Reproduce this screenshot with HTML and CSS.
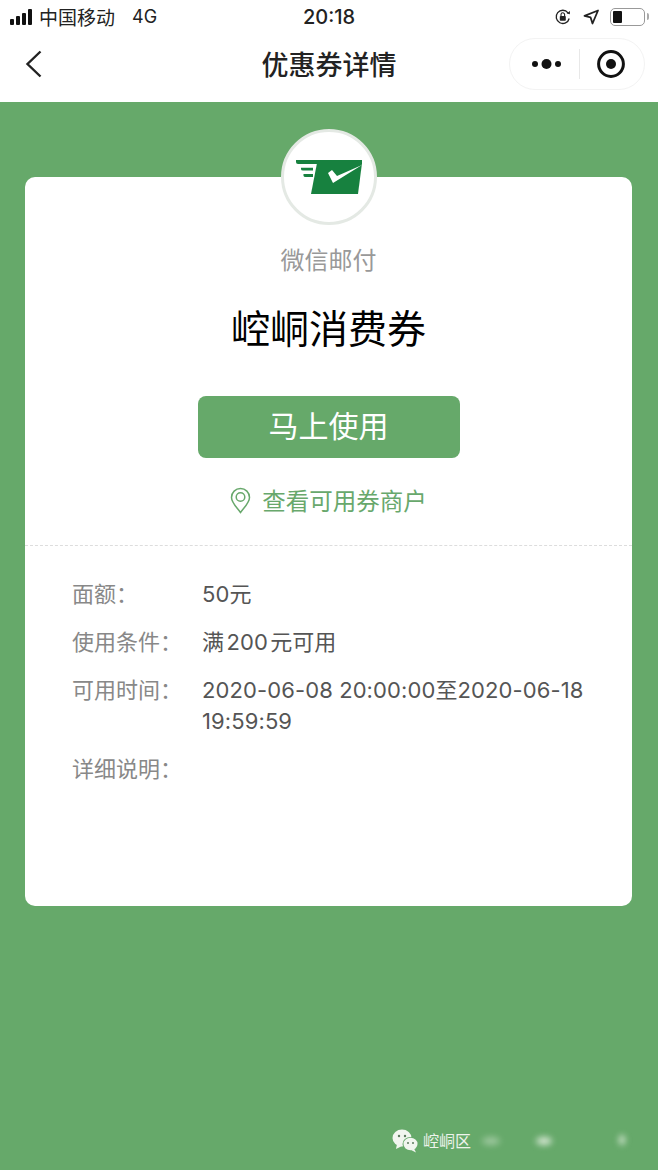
FILE: index.html
```html
<!DOCTYPE html>
<html>
<head>
    <meta charset="UTF-8">
    <title>优惠券详情</title>
    <link rel="stylesheet" href="styles.css">
</head>
<body>
    <div class="page">
        <div class="header">
            <div class="status">
                <div class="status-left">
                    <span class="signal"><i></i><i></i><i></i><i></i></span>
                    <span class="carrier">中国移动</span>
                    <span class="net">4G</span>
                </div>
                <div class="clock">20:18</div>
                <div class="status-right">
                    <svg width="18" height="18" viewBox="0 0 18 18">
                        <path d="M15.2 10.5A6.6 6.6 0 1 1 14 4.8" fill="none" stroke="#222" stroke-width="1.3"/>
                        <path d="M12.6 5.6l3.2.6.2-3.2z" fill="#222"/>
                        <rect x="5.8" y="8" width="6" height="4.8" rx=".8" fill="#222"/>
                        <path d="M7 8V6.6a1.8 1.8 0 0 1 3.6 0V8" fill="none" stroke="#222" stroke-width="1.1"/>
                    </svg>
                    <svg width="16" height="16" viewBox="0 0 16 16">
                        <path d="M15 1.5L9.5 14.5 7.6 8.4 1.5 6.8z" fill="none" stroke="#222" stroke-width="1.8" stroke-linejoin="round"/>
                    </svg>
                    <span class="battery"><i></i></span>
                </div>
            </div>
            <div class="nav">
                <svg class="back" width="18" height="28" viewBox="0 0 18 28">
                    <path d="M15.5 1.5L2.5 14l13 12.5" fill="none" stroke="#222" stroke-width="2.4"/>
                </svg>
                <div class="nav-title">优惠券详情</div>
                <div class="capsule">
                    <svg width="34" height="14" viewBox="0 0 34 14">
                        <circle cx="5" cy="7" r="3" fill="#111"/>
                        <circle cx="16.500" cy="7" r="5" fill="#111"/>
                        <circle cx="28" cy="7" r="3" fill="#111"/>
                    </svg>
                    <span class="capsule-line"></span>
                    <svg width="30" height="30" viewBox="0 0 30 30">
                        <circle cx="15" cy="15" r="12.4" fill="none" stroke="#111" stroke-width="3"/>
                        <circle cx="15" cy="15" r="5" fill="#111"/>
                    </svg>
                </div>
            </div>
        </div>

        <div class="card">
            <div class="logo">
                <svg width="68" height="36" viewBox="0 0 68 36">
                    <path d="M22 4H67L63 35H16z" fill="#17813f"/>
                    <path d="M1 1H67V5H3Q1 5 1 3z" fill="#17813f"/>
                    <path d="M6 8.700H18V11.500H8Q6 11.500 6 10z" fill="#17813f"/>
                    <path d="M8.500 15H18V18H10.500Q8.500 18 8.500 16.500z" fill="#17813f"/>
                    <path d="M33 14L37 11 42 17 67 6 38 24z" fill="#fff"/>
                </svg>
            </div>
            <div class="brand">微信邮付</div>
            <div class="coupon-name">崆峒消费券</div>
            <div class="use-btn">马上使用</div>
            <div class="shops">
                <svg width="21" height="27" viewBox="0 0 21 27">
                    <path d="M10.500 25.500C6 19.500 1.500 15.500 1.500 10.500a9 9 0 0 1 18 0c0 5-4.500 9-9 15z" fill="none" stroke="#68a86c" stroke-width="1.500"/>
                    <circle cx="10.500" cy="10" r="4.300" fill="none" stroke="#68a86c" stroke-width="1.500"/>
                </svg>
                <span>查看可用券商户</span>
            </div>
            <div class="dash"></div>
            <div class="info">
                <div class="row"><span class="label">面额：</span><span class="value">50元</span></div>
                <div class="row"><span class="label">使用条件：</span><span class="value tight">满 200 元可用</span></div>
                <div class="row"><span class="label">可用时间：</span><span class="value">2020-06-08 20:00:00至2020-06-18 19:59:59</span></div>
                <div class="row"><span class="label">详细说明：</span><span class="value"></span></div>
            </div>
        </div>

        <div class="footer">
            <svg width="28" height="24" viewBox="0 0 28 24">
                <ellipse cx="10" cy="9" rx="9.500" ry="8.500" fill="#f1f5ef"/>
                <path d="M5 15l-1 5 6-3z" fill="#f1f5ef"/>
                <ellipse cx="18.500" cy="15" rx="8" ry="7" fill="#66a96a"/>
                <ellipse cx="18.500" cy="15" rx="7" ry="6.200" fill="#f1f5ef"/>
                <path d="M22 19.500l2 4-5-2.500z" fill="#f1f5ef"/>
                <circle cx="7" cy="7" r="1.200" fill="#5c7a5e"/>
                <circle cx="13" cy="7" r="1.200" fill="#5c7a5e"/>
                <circle cx="16" cy="14" r="1" fill="#5c7a5e"/>
                <circle cx="21" cy="14" r="1" fill="#5c7a5e"/>
            </svg>
            <span class="footer-name">崆峒区</span>
            <span class="blob blob-a"></span>
            <span class="blob blob-b"></span>
            <span class="blob blob-c"></span>
        </div>
    </div>
</body>
</html>
```

FILE: styles.css
```css
* {
    margin: 0;
    padding: 0;
    box-sizing: border-box;
}
body {
    font-family: "Inter", "Noto Sans CJK SC", sans-serif;
    background: #66a96a;
}
.page {
    width: 658px;
    height: 1170px;
    display: flex;
    flex-direction: column;
    overflow: hidden;
}
.header {
    height: 102px;
    background: #fff;
    flex-shrink: 0;
}
.status {
    height: 33px;
    padding: 0 10px 0 10px;
    display: grid;
    grid-template-columns: 1fr auto 1fr;
    align-items: center;
    color: #222;
}
.status-left {
    display: flex;
    align-items: center;
    font-size: 19px;
}
.signal {
    display: flex;
    align-items: flex-end;
    gap: 2px;
    margin-right: 7px;
}
.signal i {
    display: block;
    width: 4px;
    background: #111;
    border-radius: 1px;
}
.signal i:nth-child(1) { height: 6px; }
.signal i:nth-child(2) { height: 9px; }
.signal i:nth-child(3) { height: 12px; }
.signal i:nth-child(4) { height: 16px; }
.net {
    margin-left: 17px;
    font-size: 18px;
}
.clock {
    font-size: 20px;
    font-weight: 500;
    color: #222;
}
.status-right {
    display: flex;
    align-items: center;
    justify-content: flex-end;
    gap: 11px;
}
.battery {
    position: relative;
    width: 35px;
    height: 18px;
    border: 1.500px solid #999;
    border-radius: 5px;
    padding: 2px;
    margin-right: 3px;
}
.battery:after {
    content: "";
    position: absolute;
    right: -5px;
    top: 4px;
    width: 2px;
    height: 7px;
    background: #aaa;
    border-radius: 0 2px 2px 0;
}
.battery i {
    display: block;
    width: 9px;
    height: 100%;
    background: #111;
    border-radius: 1px;
}
.nav {
    height: 69px;
    padding: 0 13px 8px 13px;
    display: grid;
    grid-template-columns: 1fr auto 1fr;
    align-items: center;
}
.back {
    margin-left: 12px;
}
.nav-title {
    font-size: 27px;
    font-weight: 500;
    color: #222;
}
.capsule {
    justify-self: end;
    width: 136px;
    height: 52px;
    border: 1px solid #f3f3f3;
    border-radius: 26px;
    display: flex;
    align-items: center;
    justify-content: space-between;
    padding: 0 18px 0 20px;
}
.capsule-line {
    width: 1px;
    height: 30px;
    background: #e8e8e8;
    margin-left: -1px;
}
.card {
    width: 607px;
    height: 729px;
    margin: 75px 0 0 25px;
    background: #fff;
    border-radius: 10px;
    display: flex;
    flex-direction: column;
    align-items: center;
    flex-shrink: 0;
}
.logo {
    width: 96px;
    height: 96px;
    margin-top: -48px;
    border-radius: 50%;
    background: #fff;
    border: 3px solid #e4e9e4;
    display: flex;
    align-items: center;
    justify-content: center;
    flex-shrink: 0;
}
.brand {
    margin-top: 19px;
    font-size: 24px;
    line-height: 34px;
    color: #999;
}
.coupon-name {
    margin-top: 24px;
    font-size: 39px;
    line-height: 54px;
    color: #000;
}
.use-btn {
    margin-top: 40px;
    width: 262px;
    height: 62px;
    background: #66a96a;
    border-radius: 8px;
    color: #fff;
    font-size: 30px;
    line-height: 60px;
    text-align: center;
}
.shops {
    margin-top: 26px;
    height: 32px;
    display: flex;
    align-items: center;
    gap: 11px;
    font-size: 23.500px;
    color: #68a86c;
}
.dash {
    width: 100%;
    margin-top: 29px;
    border-top: 1px dashed #ddd;
}
.info {
    width: 100%;
    padding: 33px 46px 0 47px;
    font-size: 22px;
    line-height: 31px;
}
.row {
    display: flex;
    margin-bottom: 17px;
}
.label {
    width: 130px;
    flex-shrink: 0;
    color: #888;
}
.value {
    flex: 1;
    color: #555;
    letter-spacing: .1px;
}
.tight {
    word-spacing: -4px;
}
.footer {
    flex: 1;
    display: flex;
    align-items: flex-end;
    padding: 0 0 17px 392px;
    color: #eef3ec;
    font-size: 16px;
}
.footer-name {
    margin-left: 3px;
    line-height: 24px;
}
.blob {
    display: block;
    background: #d5e6d2;
    border-radius: 50%;
    filter: blur(3px);
}
.blob-a {
    width: 18px;
    height: 8px;
    margin: 0 0 8px 11px;
    opacity: .5;
}
.blob-b {
    width: 16px;
    height: 8px;
    margin: 0 0 8px 36px;
}
.blob-c {
    width: 6px;
    height: 10px;
    margin: 0 0 8px 67px;
}
```
